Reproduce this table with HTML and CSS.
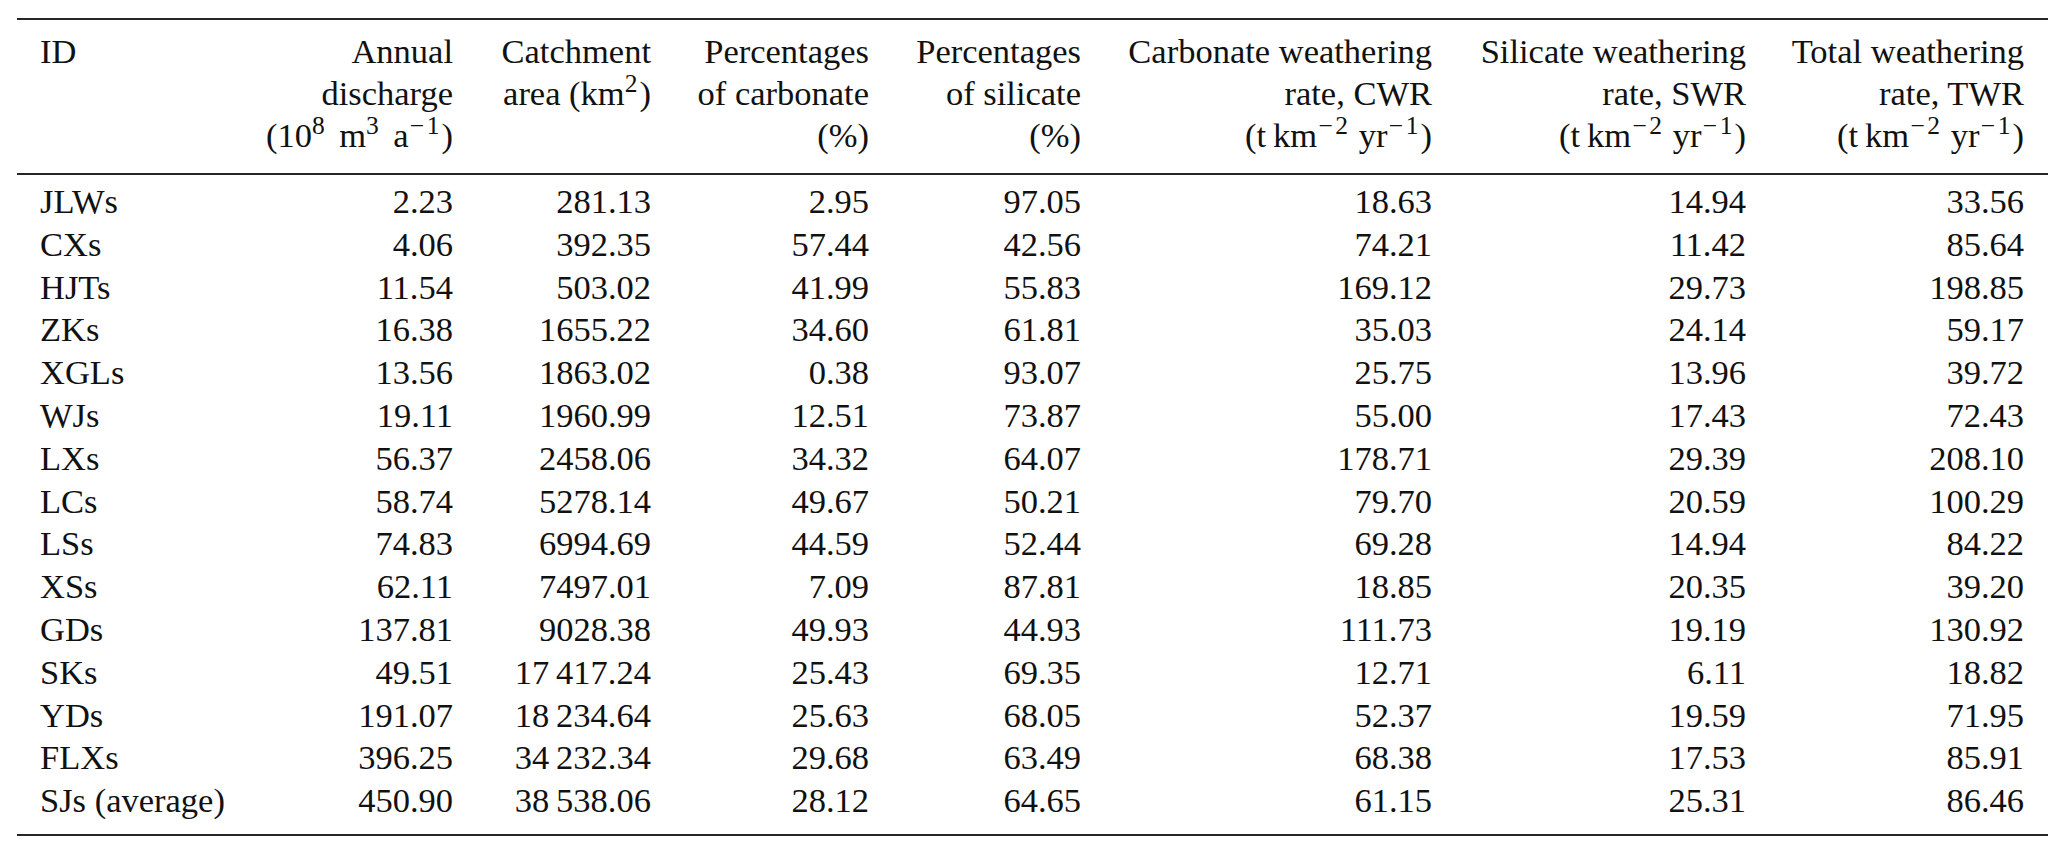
FILE: index.html
```html
<!DOCTYPE html>
<html lang="en">
<head>
<meta charset="utf-8">
<title>Weathering rates</title>
<link rel="stylesheet" href="styles.css">
</head>
<body>
<div class="page">
<table class="data">
<colgroup>
<col class="c-id"><col class="c-q"><col class="c-a"><col class="c-pc"><col class="c-ps"><col class="c-cwr"><col class="c-swr"><col class="c-twr">
</colgroup>
<thead>
<tr>
<th class="left">ID</th>
<th>Annual<br>discharge<br>(10<sup>8</sup><span class="wide"></span>m<sup>3</sup><span class="wide"></span>a<sup><span class="neg">&minus;</span>1</sup>)</th>
<th>Catchment<br>area (km<sup>2</sup>)</th>
<th>Percentages<br>of carbonate<br>(%)</th>
<th>Percentages<br>of silicate<br>(%)</th>
<th>Carbonate weathering<br>rate, CWR<br>(t&#8201;km<sup><span class="neg">&minus;</span>2</sup> yr<sup><span class="neg">&minus;</span>1</sup>)</th>
<th>Silicate weathering<br>rate, SWR<br>(t&#8201;km<sup><span class="neg">&minus;</span>2</sup> yr<sup><span class="neg">&minus;</span>1</sup>)</th>
<th>Total weathering<br>rate, TWR<br>(t&#8201;km<sup><span class="neg">&minus;</span>2</sup> yr<sup><span class="neg">&minus;</span>1</sup>)</th>
</tr>
</thead>
<tbody>
<tr><td class="left">JLWs</td><td>2.23</td><td>281.13</td><td>2.95</td><td>97.05</td><td>18.63</td><td>14.94</td><td>33.56</td></tr>
<tr><td class="left">CXs</td><td>4.06</td><td>392.35</td><td>57.44</td><td>42.56</td><td>74.21</td><td>11.42</td><td>85.64</td></tr>
<tr><td class="left">HJTs</td><td>11.54</td><td>503.02</td><td>41.99</td><td>55.83</td><td>169.12</td><td>29.73</td><td>198.85</td></tr>
<tr><td class="left">ZKs</td><td>16.38</td><td>1655.22</td><td>34.60</td><td>61.81</td><td>35.03</td><td>24.14</td><td>59.17</td></tr>
<tr><td class="left">XGLs</td><td>13.56</td><td>1863.02</td><td>0.38</td><td>93.07</td><td>25.75</td><td>13.96</td><td>39.72</td></tr>
<tr><td class="left">WJs</td><td>19.11</td><td>1960.99</td><td>12.51</td><td>73.87</td><td>55.00</td><td>17.43</td><td>72.43</td></tr>
<tr><td class="left">LXs</td><td>56.37</td><td>2458.06</td><td>34.32</td><td>64.07</td><td>178.71</td><td>29.39</td><td>208.10</td></tr>
<tr><td class="left">LCs</td><td>58.74</td><td>5278.14</td><td>49.67</td><td>50.21</td><td>79.70</td><td>20.59</td><td>100.29</td></tr>
<tr><td class="left">LSs</td><td>74.83</td><td>6994.69</td><td>44.59</td><td>52.44</td><td>69.28</td><td>14.94</td><td>84.22</td></tr>
<tr><td class="left">XSs</td><td>62.11</td><td>7497.01</td><td>7.09</td><td>87.81</td><td>18.85</td><td>20.35</td><td>39.20</td></tr>
<tr><td class="left">GDs</td><td>137.81</td><td>9028.38</td><td>49.93</td><td>44.93</td><td>111.73</td><td>19.19</td><td>130.92</td></tr>
<tr><td class="left">SKs</td><td>49.51</td><td>17&#8201;417.24</td><td>25.43</td><td>69.35</td><td>12.71</td><td>6.11</td><td>18.82</td></tr>
<tr><td class="left">YDs</td><td>191.07</td><td>18&#8201;234.64</td><td>25.63</td><td>68.05</td><td>52.37</td><td>19.59</td><td>71.95</td></tr>
<tr><td class="left">FLXs</td><td>396.25</td><td>34&#8201;232.34</td><td>29.68</td><td>63.49</td><td>68.38</td><td>17.53</td><td>85.91</td></tr>
<tr><td class="left">SJs (average)</td><td>450.90</td><td>38&#8201;538.06</td><td>28.12</td><td>64.65</td><td>61.15</td><td>25.31</td><td>86.46</td></tr>
</tbody>
</table>
</div>
</body>
</html>
```

FILE: styles.css
```css
html, body {
  margin: 0;
  padding: 0;
  background: #ffffff;
}

.page {
  padding: 18px 0 0 17px;
}

.data {
  width: 2031px;
  table-layout: fixed;
  border-collapse: collapse;
  font-family: "Liberation Serif", "Times New Roman", serif;
  font-size: 34.5px;
  color: #111111;
  border-top: 2px solid #262626;
  border-bottom: 2px solid #262626;
}

.c-id { width: 233px; }
.c-q { width: 203px; }
.c-a { width: 198px; }
.c-pc { width: 218px; }
.c-ps { width: 212px; }
.c-cwr { width: 351px; }
.c-swr { width: 314px; }
.c-twr { width: 302px; }

.data th,
.data td {
  padding: 0;
  text-align: right;
  white-space: nowrap;
  font-weight: normal;
  vertical-align: top;
}

.data th {
  line-height: 42px;
  padding-top: 10px;
  padding-bottom: 17px;
  border-bottom: 2px solid #262626;
}

.data td {
  line-height: 42.8px;
}

.data .left {
  text-align: left;
  padding-left: 23px;
}

.data th:last-child,
.data td:last-child {
  padding-right: 24px;
}

.data tbody tr:first-child td {
  padding-top: 5px;
}

.data tbody tr:last-child td {
  padding-bottom: 12px;
}

.data sup {
  font-size: 0.74em;
  line-height: 0;
  vertical-align: 0.52em;
  margin-right: 0.08em;
}

.data .neg {
  margin: 0 0.1em 0 0.05em;
}

.data .wide {
  display: inline-block;
  width: 0.36em;
}
```
